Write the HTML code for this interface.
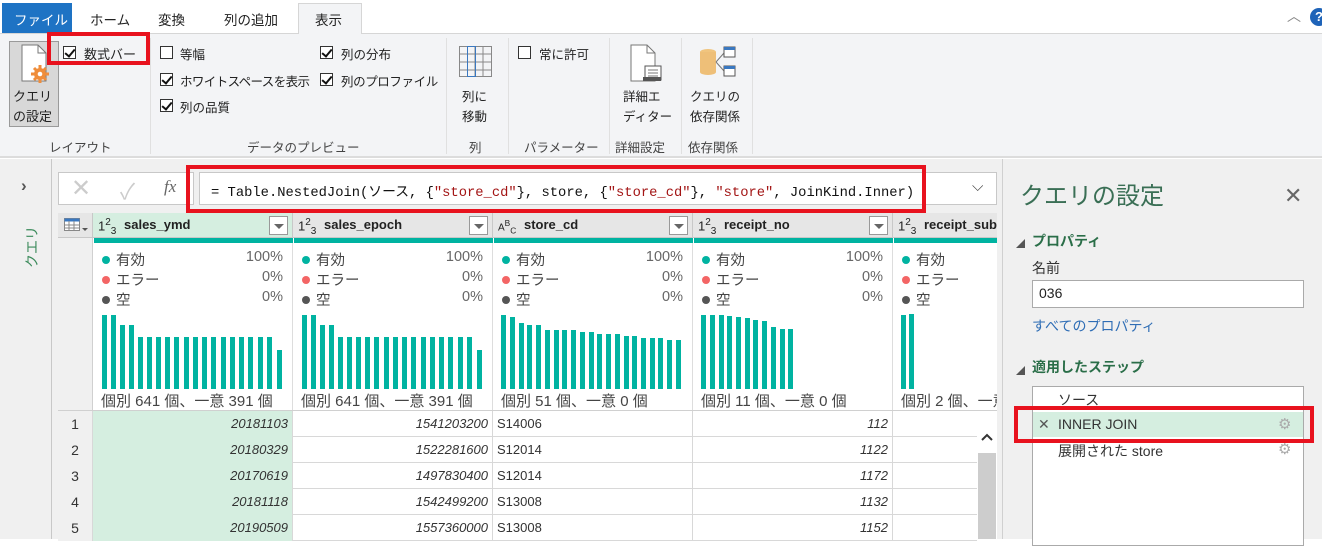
<!DOCTYPE html>
<html><head><meta charset="utf-8">
<style>
*{box-sizing:border-box;margin:0;padding:0}
body{width:1322px;height:539px;overflow:hidden;position:relative;background:#fff;font-family:"Liberation Sans","Noto Sans CJK JP",sans-serif;font-size:12.5px;color:#222}
.a{position:absolute}
.t{position:absolute;white-space:nowrap}
.cb{position:absolute;width:13px;height:13px;border:1px solid #333;background:#fff}
.cb.c::after{content:"";position:absolute;left:3px;top:0px;width:4px;height:8px;border:solid #111;border-width:0 2px 2px 0;transform:rotate(40deg)}
.red{position:absolute;border:4px solid #e8121e}
.hdr{position:absolute;top:213px;height:25px;background:#e6e6e6;border-right:1px solid #c8c8c8;border-bottom:1px solid #c8c8c8;font-weight:bold;font-size:13px}
.dd{position:absolute;top:3px;width:19px;height:19px;border:1px solid #999;background:#fff}
.dd::after{content:"";position:absolute;left:4px;top:7px;border:5px solid transparent;border-top:5px solid #666;border-bottom:0}
.ty{position:absolute;top:4px;left:5px;font-weight:normal;font-size:13px}
.prof{position:absolute;top:243px;height:167px;border-right:1px solid #ddd;font-size:14.5px;color:#444}
.prof .p{color:#666}
.dot{display:inline-block;width:8px;height:8px;border-radius:4px;margin-right:6px;vertical-align:1px}
.row{position:absolute;left:58px;width:919px;height:26px;border-bottom:1px solid #d8d8d8}
.cell{position:absolute;top:0;height:26px;line-height:26px;font-style:italic;font-size:13px;text-align:right;padding-right:4px;border-right:1px solid #d8d8d8;color:#333;font-family:"Liberation Sans Narrow","Liberation Sans",sans-serif}
.ft{font-size:15px}
</style></head><body>
<!-- tab bar -->
<div class="a" style="left:0;top:0;width:1322px;height:34px;background:#fff;border-bottom:1px solid #d6d6d6"></div>
<div class="a" style="left:2px;top:3px;width:70px;height:30px;background:#1e73c4"></div>
<div class="t" style="left:14px;top:9px;color:#fff;font-size:13.5px">ファイル</div>
<div class="t" style="left:90px;top:9px;font-size:13.5px">ホーム</div>
<div class="t" style="left:158px;top:9px;font-size:13.5px">変換</div>
<div class="t" style="left:224px;top:9px;font-size:13.5px">列の追加</div>
<div class="a" style="left:298px;top:3px;width:64px;height:32px;background:#f3f4f6;border:1px solid #d6d6d6;border-bottom:none"></div>
<div class="t" style="left:315px;top:9px;font-size:13.5px">表示</div>
<div class="t" style="left:1287px;top:6px;color:#888;font-size:14px">︿</div>
<div class="a" style="left:1310px;top:8px;width:18px;height:18px;border-radius:9px;background:#1e63b8"></div>
<div class="t" style="left:1315px;top:9px;color:#fff;font-weight:bold;font-size:13px">?</div>
<!-- ribbon -->
<div class="a" style="left:0;top:34px;width:1322px;height:124px;background:#f3f4f6;border-bottom:2px solid #dcdcdc"></div>
<div class="a" style="left:9px;top:41px;width:50px;height:86px;background:#d8d8d8;border:1px solid #9a9a9a"></div>
<svg class="a" style="left:20px;top:44px" width="32" height="42"><path d="M2 1h16l8 8v28H2z" fill="#fff" stroke="#777"/><path d="M18 1v8h8" fill="none" stroke="#777"/><g stroke="#ef8d3b" stroke-width="3"><path d="M20 21v18M11 30h18M14 24l12 12M26 24l-12 12"/></g><circle cx="20" cy="30" r="6" fill="#ef8d3b"/><circle cx="20" cy="30" r="2.3" fill="#fff"/></svg>
<div class="t" style="left:13px;top:87px;font-size:13px;line-height:20px;text-align:center">クエリ<br>の設定</div>
<div class="cb c" style="left:63px;top:46px"></div>
<div class="t" style="left:84px;top:44px;font-size:13px">数式バー</div>
<div class="red" style="left:47px;top:32px;width:103px;height:33px"></div>
<div class="t" style="left:49px;top:137px;color:#444">レイアウト</div>
<div class="a" style="left:150px;top:38px;width:1px;height:116px;background:#e0e0e0"></div>
<div class="cb" style="left:160px;top:46px"></div><div class="t" style="left:180px;top:44px">等幅</div>
<div class="cb c" style="left:160px;top:73px"></div><div class="t" style="left:180px;top:71px;letter-spacing:-0.6px">ホワイトスペースを表示</div>
<div class="cb c" style="left:160px;top:99px"></div><div class="t" style="left:180px;top:97px">列の品質</div>
<div class="cb c" style="left:320px;top:46px"></div><div class="t" style="left:341px;top:44px">列の分布</div>
<div class="cb c" style="left:320px;top:73px"></div><div class="t" style="left:341px;top:71px;letter-spacing:-0.4px">列のプロファイル</div>
<div class="t" style="left:247px;top:137px;color:#444">データのプレビュー</div>
<div class="a" style="left:446px;top:38px;width:1px;height:116px;background:#e0e0e0"></div>
<svg class="a" style="left:459px;top:46px" width="34" height="32"><g fill="none" stroke="#888"><rect x="0.5" y="0.5" width="32" height="30"/><path d="M0 8h33M0 16h33M0 24h33M16 0v31M24 0v31"/></g><rect x="8.5" y="0.5" width="8" height="30" fill="none" stroke="#3a78c0"/></svg>
<div class="t" style="left:462px;top:87px;line-height:20px">列に<br>移動</div>
<div class="t" style="left:469px;top:137px;color:#444">列</div>
<div class="a" style="left:508px;top:38px;width:1px;height:116px;background:#e0e0e0"></div>
<div class="cb" style="left:518px;top:46px"></div><div class="t" style="left:539px;top:44px">常に許可</div>
<div class="t" style="left:524px;top:137px;color:#444">パラメーター</div>
<div class="a" style="left:609px;top:38px;width:1px;height:116px;background:#e0e0e0"></div>
<svg class="a" style="left:629px;top:44px" width="36" height="40"><path d="M2 1h16l8 8v28H2z" fill="#fff" stroke="#777"/><path d="M18 1v8h8" fill="none" stroke="#777"/><rect x="16" y="22" width="16" height="14" fill="#fff" stroke="#555"/><path d="M19 26h10M19 29h10M19 32h10" stroke="#777"/><rect x="14" y="33" width="18" height="4" fill="#555"/></svg>
<div class="t" style="left:623px;top:87px;line-height:20px">詳細エ<br>ディター</div>
<div class="t" style="left:615px;top:137px;color:#444">詳細設定</div>
<div class="a" style="left:681px;top:38px;width:1px;height:116px;background:#e0e0e0"></div>
<svg class="a" style="left:698px;top:46px" width="42" height="32"><ellipse cx="10" cy="6" rx="8" ry="3" fill="#f0c47e"/><rect x="2" y="6" width="16" height="20" fill="#eebf78"/><ellipse cx="10" cy="26" rx="8" ry="3" fill="#eebf78"/><path d="M18 16l8-9M18 16l8 9" stroke="#777" fill="none"/><rect x="26" y="1" width="11" height="10" fill="#fff" stroke="#555"/><rect x="26" y="1" width="11" height="3" fill="#3a78c0"/><rect x="26" y="20" width="11" height="10" fill="#fff" stroke="#555"/><rect x="26" y="20" width="11" height="3" fill="#3a78c0"/></svg>
<div class="t" style="left:690px;top:87px;line-height:20px;text-align:center">クエリの<br>依存関係</div>
<div class="t" style="left:688px;top:137px;color:#444">依存関係</div>
<div class="a" style="left:752px;top:38px;width:1px;height:116px;background:#e0e0e0"></div>
<!-- main gray bg -->
<div class="a" style="left:0;top:159px;width:1322px;height:380px;background:#f0f0f0"></div>
<div class="a" style="left:51px;top:159px;width:1px;height:380px;background:#c8c8c8"></div>
<div class="t" style="left:21px;top:176px;font-size:17px;font-weight:bold;color:#555">›</div>
<div class="t" style="left:17px;top:226px;writing-mode:vertical-rl;transform:rotate(180deg);color:#3a8a5a;font-size:14px"><span style="writing-mode:vertical-rl;text-orientation:sideways">クエリ</span></div>
<!-- formula bar -->
<div class="a" style="left:58px;top:172px;width:136px;height:33px;background:#fff;border:1px solid #c8c8c8"></div>
<div class="t" style="left:71px;top:174px;font-size:24px;color:#ccc">✕</div>
<div class="t" style="left:120px;top:174px;font-size:22px;color:#ccc">✓</div>
<div class="t" style="left:164px;top:177px;font-family:'Liberation Serif',serif;font-style:italic;font-size:17px;color:#666">fx</div>
<div class="a" style="left:199px;top:172px;width:798px;height:33px;background:#fff;border:1px solid #c8c8c8"></div>
<div class="t" style="left:211px;top:180px;font-family:'Liberation Mono','Noto Sans CJK JP',monospace;font-size:13.8px;color:#111">= Table.NestedJoin(ソース, {<span style="color:#a31515">"store_cd"</span>}, store, {<span style="color:#a31515">"store_cd"</span>}, <span style="color:#a31515">"store"</span>, JoinKind.Inner)</div>
<div class="t" style="left:972px;top:178px;font-size:15px;color:#444">⌵</div>
<div class="red" style="left:186px;top:165px;width:740px;height:48px"></div>
<!-- grid -->
<div class="a" style="left:58px;top:213px;width:939px;height:326px;background:#fff"></div>
<div class="hdr" style="left:58px;width:35px"></div>
<svg class="a" style="left:64px;top:218px" width="26" height="16"><rect x="0.5" y="0.5" width="15" height="12" fill="#fff" stroke="#888"/><rect x="0.5" y="0.5" width="15" height="3" fill="#3a78c0"/><path d="M0 7h16M0 10h16M5 3v10M10 3v10" stroke="#888"/><path d="M18 10l3 3 3-3" fill="#555"/></svg>
<div class="hdr" style="left:93px;width:200px;background:#d5eee0"><span class="ty">1<sup style="font-size:10px">2</sup><sub style="font-size:10px">3</sub></span><span class="t" style="left:31px;top:4px">sales_ymd</span><div class="dd" style="left:176px"></div></div>
<div class="hdr" style="left:293px;width:200px"><span class="ty">1<sup style="font-size:10px">2</sup><sub style="font-size:10px">3</sub></span><span class="t" style="left:31px;top:4px">sales_epoch</span><div class="dd" style="left:176px"></div></div>
<div class="hdr" style="left:493px;width:200px"><span class="ty" style="font-size:10px;top:5px">A<sup>B</sup><sub>C</sub></span><span class="t" style="left:31px;top:4px">store_cd</span><div class="dd" style="left:176px"></div></div>
<div class="hdr" style="left:693px;width:200px"><span class="ty">1<sup style="font-size:10px">2</sup><sub style="font-size:10px">3</sub></span><span class="t" style="left:31px;top:4px">receipt_no</span><div class="dd" style="left:176px"></div></div>
<div class="hdr" style="left:893px;width:104px;overflow:hidden;border-right:none"><span class="ty">1<sup style="font-size:10px">2</sup><sub style="font-size:10px">3</sub></span><span class="t" style="left:31px;top:4px">receipt_sub</span></div>
<div class="a" style="left:58px;top:238px;width:35px;height:172px;background:#f0f0f0;border-right:1px solid #d0d0d0"></div>
<div class="a" style="left:94px;top:238px;width:903px;height:5px;background:#00b3a1"></div>
<div class="a" style="left:293px;top:238px;width:1px;height:5px;background:#fff"></div>
<div class="a" style="left:493px;top:238px;width:1px;height:5px;background:#fff"></div>
<div class="a" style="left:693px;top:238px;width:1px;height:5px;background:#fff"></div>
<div class="a" style="left:893px;top:238px;width:1px;height:5px;background:#fff"></div>

<div class="prof" style="left:94px;width:199px"><div class="t" style="left:8px;top:6px"><span class="dot" style="background:#00b3a1"></span>有効</div><div class="t p" style="right:9px;top:6px">100%</div><div class="t" style="left:8px;top:26px"><span class="dot" style="background:#f36565"></span>エラー</div><div class="t p" style="right:9px;top:26px">0%</div><div class="t" style="left:8px;top:46px"><span class="dot" style="background:#555"></span>空</div><div class="t p" style="right:9px;top:46px">0%</div><div class="t ft" style="left:7px;top:147px">個別 641 個、一意 391 個</div></div>
<div class="prof" style="left:294px;width:199px"><div class="t" style="left:8px;top:6px"><span class="dot" style="background:#00b3a1"></span>有効</div><div class="t p" style="right:9px;top:6px">100%</div><div class="t" style="left:8px;top:26px"><span class="dot" style="background:#f36565"></span>エラー</div><div class="t p" style="right:9px;top:26px">0%</div><div class="t" style="left:8px;top:46px"><span class="dot" style="background:#555"></span>空</div><div class="t p" style="right:9px;top:46px">0%</div><div class="t ft" style="left:7px;top:147px">個別 641 個、一意 391 個</div></div>
<div class="prof" style="left:494px;width:199px"><div class="t" style="left:8px;top:6px"><span class="dot" style="background:#00b3a1"></span>有効</div><div class="t p" style="right:9px;top:6px">100%</div><div class="t" style="left:8px;top:26px"><span class="dot" style="background:#f36565"></span>エラー</div><div class="t p" style="right:9px;top:26px">0%</div><div class="t" style="left:8px;top:46px"><span class="dot" style="background:#555"></span>空</div><div class="t p" style="right:9px;top:46px">0%</div><div class="t ft" style="left:7px;top:147px">個別 51 個、一意 0 個</div></div>
<div class="prof" style="left:694px;width:199px"><div class="t" style="left:8px;top:6px"><span class="dot" style="background:#00b3a1"></span>有効</div><div class="t p" style="right:9px;top:6px">100%</div><div class="t" style="left:8px;top:26px"><span class="dot" style="background:#f36565"></span>エラー</div><div class="t p" style="right:9px;top:26px">0%</div><div class="t" style="left:8px;top:46px"><span class="dot" style="background:#555"></span>空</div><div class="t p" style="right:9px;top:46px">0%</div><div class="t ft" style="left:7px;top:147px">個別 11 個、一意 0 個</div></div>
<div class="prof" style="left:894px;width:103px;overflow:hidden;border:none"><div class="t" style="left:8px;top:6px"><span class="dot" style="background:#00b3a1"></span>有効</div><div class="t" style="left:8px;top:26px"><span class="dot" style="background:#f36565"></span>エラー</div><div class="t" style="left:8px;top:46px"><span class="dot" style="background:#555"></span>空</div><div class="t ft" style="left:7px;top:147px">個別 2 個、一意</div></div>
<svg class="a" style="left:0;top:0" width="1000" height="400"><g fill="#00b3a1">
<rect x="102" y="315" width="5" height="74"/><rect x="111" y="315" width="5" height="74"/><rect x="120" y="325" width="5" height="64"/><rect x="129" y="325" width="5" height="64"/><rect x="138" y="337" width="5" height="52"/><rect x="147" y="337" width="5" height="52"/><rect x="156" y="337" width="5" height="52"/><rect x="165" y="337" width="5" height="52"/><rect x="174" y="337" width="5" height="52"/><rect x="184" y="337" width="5" height="52"/><rect x="193" y="337" width="5" height="52"/><rect x="202" y="337" width="5" height="52"/><rect x="211" y="337" width="5" height="52"/><rect x="221" y="337" width="5" height="52"/><rect x="230" y="337" width="5" height="52"/><rect x="239" y="337" width="5" height="52"/><rect x="248" y="337" width="5" height="52"/><rect x="258" y="337" width="5" height="52"/><rect x="267" y="337" width="5" height="52"/><rect x="277" y="350" width="5" height="39"/>
<rect x="302" y="315" width="5" height="74"/><rect x="311" y="315" width="5" height="74"/><rect x="320" y="325" width="5" height="64"/><rect x="329" y="325" width="5" height="64"/><rect x="338" y="337" width="5" height="52"/><rect x="347" y="337" width="5" height="52"/><rect x="356" y="337" width="5" height="52"/><rect x="365" y="337" width="5" height="52"/><rect x="374" y="337" width="5" height="52"/><rect x="384" y="337" width="5" height="52"/><rect x="393" y="337" width="5" height="52"/><rect x="402" y="337" width="5" height="52"/><rect x="411" y="337" width="5" height="52"/><rect x="421" y="337" width="5" height="52"/><rect x="430" y="337" width="5" height="52"/><rect x="439" y="337" width="5" height="52"/><rect x="448" y="337" width="5" height="52"/><rect x="458" y="337" width="5" height="52"/><rect x="467" y="337" width="5" height="52"/><rect x="477" y="350" width="5" height="39"/>
<rect x="501" y="315" width="5" height="74"/><rect x="510" y="317" width="5" height="72"/><rect x="519" y="323" width="5" height="66"/><rect x="527" y="325" width="5" height="64"/><rect x="536" y="325" width="5" height="64"/><rect x="545" y="330" width="5" height="59"/><rect x="554" y="330" width="5" height="59"/><rect x="562" y="330" width="5" height="59"/><rect x="571" y="330" width="5" height="59"/><rect x="580" y="332" width="5" height="57"/><rect x="589" y="332" width="5" height="57"/><rect x="597" y="334" width="5" height="55"/><rect x="606" y="334" width="5" height="55"/><rect x="615" y="334" width="5" height="55"/><rect x="624" y="336" width="5" height="53"/><rect x="632" y="336" width="5" height="53"/><rect x="641" y="338" width="5" height="51"/><rect x="650" y="338" width="5" height="51"/><rect x="658" y="338" width="5" height="51"/><rect x="667" y="340" width="5" height="49"/><rect x="676" y="340" width="5" height="49"/>
<rect x="701" y="315" width="5" height="74"/><rect x="710" y="315" width="5" height="74"/><rect x="719" y="315" width="5" height="74"/><rect x="727" y="316" width="5" height="73"/><rect x="736" y="317" width="5" height="72"/><rect x="745" y="318" width="5" height="71"/><rect x="753" y="320" width="5" height="69"/><rect x="762" y="321" width="5" height="68"/><rect x="771" y="327" width="5" height="62"/><rect x="780" y="329" width="5" height="60"/><rect x="788" y="329" width="5" height="60"/>
<rect x="901" y="315" width="5" height="74"/><rect x="909" y="314" width="5" height="75"/>
</g></svg>
<!-- rows -->
<div class="a" style="left:58px;top:410px;width:939px;height:1px;background:#d0d0d0"></div>
<div class="row" style="top:411px"><div class="cell" style="left:0;width:35px;background:#f0f0f0;text-align:center;font-style:normal;padding:0;font-size:14px">1</div><div class="cell" style="left:35px;width:200px;background:#d5eee0">20181103</div><div class="cell" style="left:235px;width:200px">1541203200</div><div class="cell" style="left:435px;width:200px;text-align:left;font-style:normal;padding-left:4px">S14006</div><div class="cell" style="left:635px;width:200px">112</div></div>
<div class="row" style="top:437px"><div class="cell" style="left:0;width:35px;background:#f0f0f0;text-align:center;font-style:normal;padding:0;font-size:14px">2</div><div class="cell" style="left:35px;width:200px;background:#d5eee0">20180329</div><div class="cell" style="left:235px;width:200px">1522281600</div><div class="cell" style="left:435px;width:200px;text-align:left;font-style:normal;padding-left:4px">S12014</div><div class="cell" style="left:635px;width:200px">1122</div></div>
<div class="row" style="top:463px"><div class="cell" style="left:0;width:35px;background:#f0f0f0;text-align:center;font-style:normal;padding:0;font-size:14px">3</div><div class="cell" style="left:35px;width:200px;background:#d5eee0">20170619</div><div class="cell" style="left:235px;width:200px">1497830400</div><div class="cell" style="left:435px;width:200px;text-align:left;font-style:normal;padding-left:4px">S12014</div><div class="cell" style="left:635px;width:200px">1172</div></div>
<div class="row" style="top:489px"><div class="cell" style="left:0;width:35px;background:#f0f0f0;text-align:center;font-style:normal;padding:0;font-size:14px">4</div><div class="cell" style="left:35px;width:200px;background:#d5eee0">20181118</div><div class="cell" style="left:235px;width:200px">1542499200</div><div class="cell" style="left:435px;width:200px;text-align:left;font-style:normal;padding-left:4px">S13008</div><div class="cell" style="left:635px;width:200px">1132</div></div>
<div class="row" style="top:515px"><div class="cell" style="left:0;width:35px;background:#f0f0f0;text-align:center;font-style:normal;padding:0;font-size:14px">5</div><div class="cell" style="left:35px;width:200px;background:#d5eee0">20190509</div><div class="cell" style="left:235px;width:200px">1557360000</div><div class="cell" style="left:435px;width:200px;text-align:left;font-style:normal;padding-left:4px">S13008</div><div class="cell" style="left:635px;width:200px">1152</div></div>
<div class="a" style="left:977px;top:420px;width:20px;height:119px;background:#fff"></div>
<div class="a" style="left:978px;top:453px;width:18px;height:86px;background:#cdcdcd"></div>
<svg class="a" style="left:980px;top:432px" width="14" height="10"><path d="M2 8l5-5 5 5" fill="none" stroke="#333" stroke-width="2"/></svg>
<!-- right pane -->
<div class="a" style="left:1002px;top:159px;width:1px;height:380px;background:#d0d0d0"></div>
<div class="t" style="left:1020px;top:176px;font-size:24px;color:#3a6f55">クエリの設定</div>
<div class="t" style="left:1284px;top:183px;font-size:22px;color:#666">✕</div>
<div class="t" style="left:1016px;top:237px;font-size:9px;color:#555">◢</div>
<div class="t" style="left:1032px;top:231px;font-size:14px;font-weight:bold;color:#2a6e48">プロパティ</div>
<div class="t" style="left:1032px;top:258px;font-size:14px;color:#333">名前</div>
<div class="a" style="left:1032px;top:280px;width:272px;height:28px;background:#fff;border:1px solid #aaa"></div>
<div class="t" style="left:1039px;top:285px;font-size:14px;color:#222">036</div>
<div class="t" style="left:1032px;top:316px;font-size:14px;color:#2e6db5">すべてのプロパティ</div>
<div class="t" style="left:1016px;top:364px;font-size:9px;color:#555">◢</div>
<div class="t" style="left:1032px;top:357px;font-size:14px;font-weight:bold;color:#2a6e48">適用したステップ</div>
<div class="a" style="left:1032px;top:386px;width:272px;height:160px;background:#fff;border:1px solid #aaa"></div>
<div class="t" style="left:1058px;top:390px;font-size:14px;color:#333">ソース</div>
<div class="a" style="left:1033px;top:412px;width:270px;height:25px;background:#d5eee0"></div>
<div class="t" style="left:1038px;top:416px;font-size:14px;color:#555">✕</div>
<div class="t" style="left:1058px;top:416px;font-size:14px;color:#333">INNER JOIN</div>
<div class="t" style="left:1278px;top:415px;font-size:15px;color:#aaa">⚙</div>
<div class="t" style="left:1058px;top:441px;font-size:14px;color:#333">展開された store</div>
<div class="t" style="left:1278px;top:440px;font-size:15px;color:#aaa">⚙</div>
<div class="red" style="left:1014px;top:406px;width:300px;height:37px"></div>
</body></html>
